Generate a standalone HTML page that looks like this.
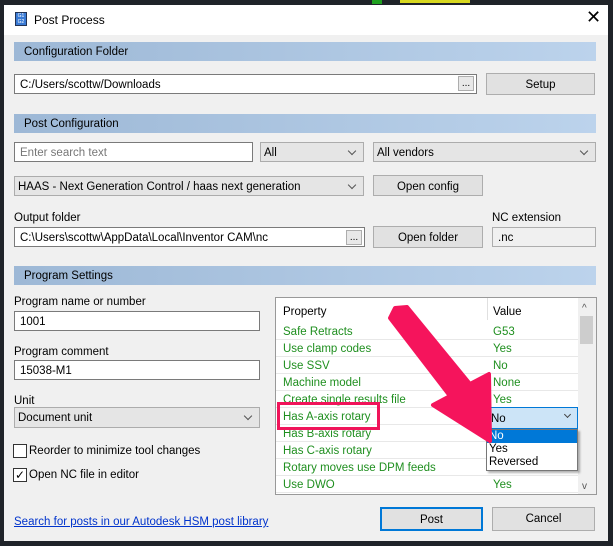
<!DOCTYPE html>
<html><head><meta charset="utf-8"><style>
*{box-sizing:border-box;margin:0;padding:0}
body{width:613px;height:546px;background:#1f2329;position:relative;overflow:hidden;font-family:"Liberation Sans",sans-serif;font-size:11.5px;line-height:15px;color:#000}
.a{position:absolute}
.win{left:4px;top:5px;width:604px;height:536px;background:#f0f0f0}
.title{left:4px;top:5px;width:604px;height:30px;background:#fff}
.hdr{left:14px;width:582px;height:19px;background:linear-gradient(90deg,#9db8d6,#bcd3ec);padding:3px 0 0 10px}
.inp{background:#fff;border:1px solid #7a7a7a;padding:3px 0 0 5px;height:20px;white-space:nowrap;overflow:hidden}
.btn{background:#e1e1e1;border:1px solid #adadad;text-align:center;padding-top:4px}
.sel{background:#e5e5e5;border:1px solid #acacac;padding:3px 0 0 3px;height:20px}
.sel:after{content:"";position:absolute;right:8px;top:5px;width:5px;height:5px;border-right:1px solid #555;border-bottom:1px solid #555;transform:rotate(45deg)}
.dots{background:#e8e8e8;border:1px solid #adadad;width:16px;height:15px;font-size:10px;text-align:center;line-height:14px}
.g{color:#1f8f1f}
.row{left:276px;width:302px;height:17px;border-bottom:1px solid #e8e8e8}
.row span{position:absolute;left:7px;top:2px}
.row b{font-weight:normal;position:absolute;left:217px;top:2px}
.l{margin-top:1px}
</style></head><body>
<div class="a" style="left:372px;top:0;width:10px;height:4px;background:#1fa01f"></div>
<div class="a" style="left:400px;top:0;width:70px;height:3px;background:#d8d820"></div>
<div class="a win"></div>
<div class="a title"></div>
<div class="a" style="left:15px;top:12px;width:12px;height:14px;background:#3a7bd5;border:1px solid #235;color:#fff;font-size:5px;line-height:6px;text-align:center">G1<br>G2</div>
<div class="a" style="left:34px;top:13px;font-size:12px">Post Process</div>
<div class="a" style="left:586px;top:10px;font-size:18px;font-weight:300">✕</div>

<div class="a hdr" style="top:42px">Configuration Folder</div>
<div class="a inp" style="left:14px;top:74px;width:463px">C:/Users/scottw/Downloads</div>
<div class="a dots" style="left:458px;top:76px">...</div>
<div class="a btn" style="left:486px;top:73px;width:109px;height:22px">Setup</div>

<div class="a hdr" style="top:114px">Post Configuration</div>
<div class="a inp" style="left:14px;top:142px;width:239px;color:#777">Enter search text</div>
<div class="a sel" style="left:260px;top:142px;width:104px">All</div>
<div class="a sel" style="left:373px;top:142px;width:223px">All vendors</div>
<div class="a sel" style="left:14px;top:176px;width:350px">HAAS - Next Generation Control / haas next generation</div>
<div class="a btn" style="left:373px;top:175px;width:110px;height:21px">Open config</div>
<div class="a" style="left:14px;top:211px">Output folder</div>
<div class="a" style="left:492px;top:211px">NC extension</div>
<div class="a inp" style="left:14px;top:227px;width:351px">C:\Users\scottw\AppData\Local\Inventor CAM\nc</div>
<div class="a dots" style="left:346px;top:230px">...</div>
<div class="a btn" style="left:373px;top:226px;width:110px;height:22px">Open folder</div>
<div class="a inp" style="left:492px;top:227px;width:104px;background:#f0f0f0;border-color:#adadad">.nc</div>

<div class="a hdr" style="top:266px">Program Settings</div>
<div class="a" style="left:14px;top:295px">Program name or number</div>
<div class="a inp" style="left:14px;top:311px;width:246px">1001</div>
<div class="a" style="left:14px;top:345px">Program comment</div>
<div class="a inp" style="left:14px;top:360px;width:246px">15038-M1</div>
<div class="a" style="left:14px;top:394px">Unit</div>
<div class="a sel" style="left:14px;top:407px;width:246px;height:21px">Document unit</div>
<div class="a" style="left:13px;top:444px;width:14px;height:14px;border:1px solid #333;background:#fff"></div>
<div class="a" style="left:29px;top:444px">Reorder to minimize tool changes</div>
<div class="a" style="left:13px;top:468px;width:14px;height:14px;border:1px solid #333;background:#fff;font-size:12px;line-height:12px;text-align:center">✓</div>
<div class="a" style="left:29px;top:468px">Open NC file in editor</div>
<div class="a" style="left:14px;top:515px;text-decoration:underline;color:#0033cc">Search for posts in our Autodesk HSM post library</div>

<div class="a" style="left:275px;top:297px;width:322px;height:198px;background:#fff;border:1px solid #999"></div>
<div class="a" style="left:487px;top:298px;width:1px;height:22px;background:#e0e0e0"></div>
<div class="a" style="left:283px;top:305px">Property</div>
<div class="a" style="left:493px;top:305px">Value</div>
<div class="a" style="left:578px;top:298px;width:18px;height:196px;background:#f0f0f0"></div>
<div class="a" style="left:580px;top:316px;width:13px;height:28px;background:#cdcdcd"></div>
<div class="a" style="left:582px;top:301px;font-size:10px;color:#555">^</div>
<div class="a" style="left:582px;top:479px;font-size:10px;color:#555">v</div>
<div class="a row g" style="top:323px"><span>Safe Retracts</span><b>G53</b></div>
<div class="a row g" style="top:340px"><span>Use clamp codes</span><b>Yes</b></div>
<div class="a row g" style="top:357px"><span>Use SSV</span><b>No</b></div>
<div class="a row g" style="top:374px"><span>Machine model</span><b>None</b></div>
<div class="a row g" style="top:391px"><span>Create single results file</span><b>Yes</b></div>
<div class="a row g" style="top:408px"><span>Has A-axis rotary</span></div>
<div class="a row g" style="top:425px"><span>Has B-axis rotary</span></div>
<div class="a row g" style="top:442px"><span>Has C-axis rotary</span></div>
<div class="a row g" style="top:459px"><span>Rotary moves use DPM feeds</span><b>No</b></div>
<div class="a row g" style="top:476px"><span>Use DWO</span><b>Yes</b></div>
<div class="a" style="left:487px;top:407px;width:91px;height:22px;background:#cce4f7;border:1px solid #0078d7;padding:4px 0 0 3px">No</div>
<div class="a" style="left:565px;top:412px;width:5px;height:5px;border-right:1px solid #444;border-bottom:1px solid #444;transform:rotate(45deg)"></div>
<div class="a" style="left:486px;top:429px;width:92px;height:42px;background:#fff;border:1px solid #777;box-shadow:2px 2px 2px rgba(0,0,0,.3)"></div>
<div class="a" style="left:487px;top:430px;width:90px;height:13px;background:#0078d7;color:#fff;padding-left:2px;line-height:13px">No</div>
<div class="a" style="left:489px;top:443px;line-height:13px">Yes</div>
<div class="a" style="left:489px;top:456px;line-height:13px">Reversed</div>
<div class="a" style="left:277px;top:402px;width:103px;height:28px;border:3px solid #f0145a"></div>
<svg class="a" style="left:0;top:0" width="613" height="546"><polygon points="390,318 395,308 407,307 470,384 489,374 490,441 433,405 450,396" fill="#f5145c" stroke="#f5145c" stroke-linejoin="round" stroke-width="4"/></svg>

<div class="a btn" style="left:380px;top:507px;width:103px;height:24px;border:2px solid #0078d7">Post</div>
<div class="a btn" style="left:492px;top:507px;width:103px;height:24px">Cancel</div>
</body></html>
